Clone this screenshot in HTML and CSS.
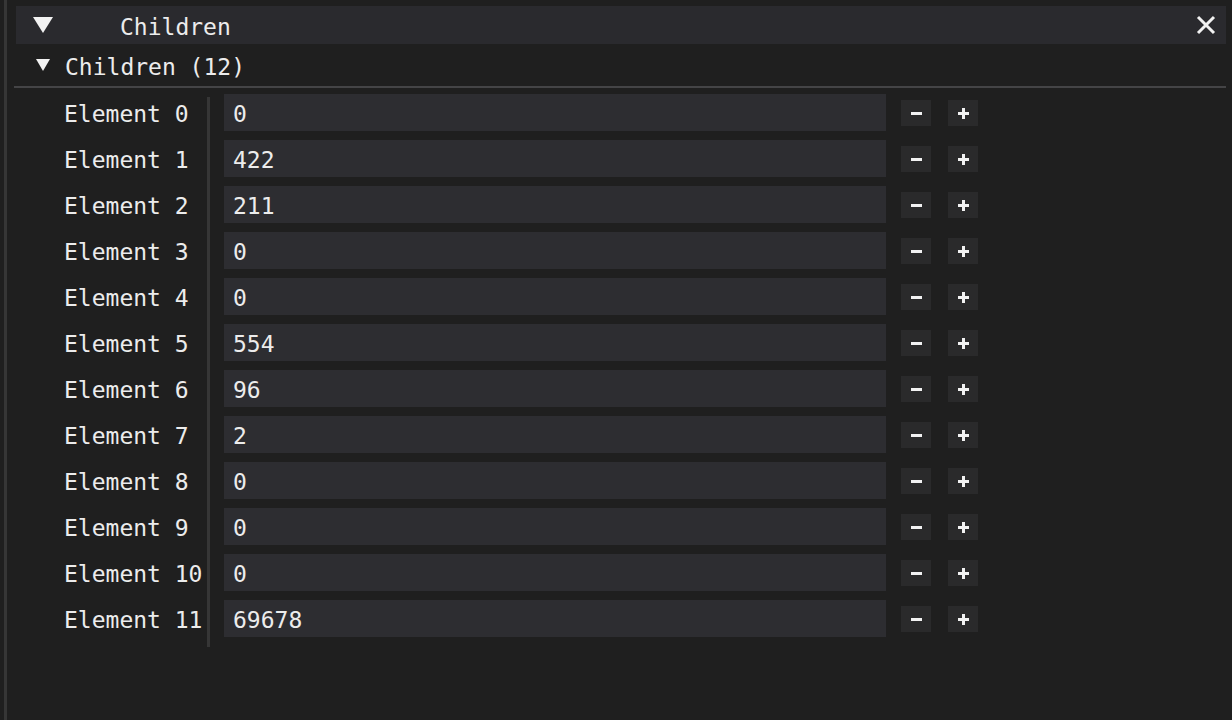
FILE: index.html
```html
<!DOCTYPE html>
<html lang="en">
<head>
  <meta charset="UTF-8">
  <title>Children</title>
  <link rel="stylesheet" href="styles.css">
</head>
<body>

<div class="window">
  <div class="titlebar">
    <svg class="arrow-big" width="20" height="16" viewBox="0 0 20 16"><polygon points="0,0 20,0 10,16" fill="#f2f2f2"/></svg>
    <span class="title">Children</span>
    <svg class="close" width="20" height="20" viewBox="0 0 20 20"><path d="M2 2 L18 18 M18 2 L2 18" stroke="#f2f2f2" stroke-width="3"/></svg>
  </div>

  <div class="tree-node">
    <svg class="arrow-small" width="14" height="12" viewBox="0 0 14 12"><polygon points="0,0 14,0 7,12" fill="#f2f2f2"/></svg>
    <span>Children (12)</span>
  </div>
  <div class="separator"></div>

  <div class="list">
    <div class="divider"></div>
    <!-- 12 rows -->
    <div class="label">Element 0</div><div class="field">0</div><button class="btn minus"></button><button class="btn plus"></button>
    <div class="label">Element 1</div><div class="field">422</div><button class="btn minus"></button><button class="btn plus"></button>
    <div class="label">Element 2</div><div class="field">211</div><button class="btn minus"></button><button class="btn plus"></button>
    <div class="label">Element 3</div><div class="field">0</div><button class="btn minus"></button><button class="btn plus"></button>
    <div class="label">Element 4</div><div class="field">0</div><button class="btn minus"></button><button class="btn plus"></button>
    <div class="label">Element 5</div><div class="field">554</div><button class="btn minus"></button><button class="btn plus"></button>
    <div class="label">Element 6</div><div class="field">96</div><button class="btn minus"></button><button class="btn plus"></button>
    <div class="label">Element 7</div><div class="field">2</div><button class="btn minus"></button><button class="btn plus"></button>
    <div class="label">Element 8</div><div class="field">0</div><button class="btn minus"></button><button class="btn plus"></button>
    <div class="label">Element 9</div><div class="field">0</div><button class="btn minus"></button><button class="btn plus"></button>
    <div class="label">Element 10</div><div class="field">0</div><button class="btn minus"></button><button class="btn plus"></button>
    <div class="label">Element 11</div><div class="field">69678</div><button class="btn minus"></button><button class="btn plus"></button>
  </div>
</div>

</body>
</html>
```

FILE: styles.css
```css
body {
  margin: 0;
  padding: 0;
  background: #1f1f1f;
  color: #ececec;
  font-family: "DejaVu Sans Mono", "Liberation Mono", monospace;
  font-size: 23px;
}

.window {
  margin-left: 4px;
  border-left: 3px solid #363636;
  height: 720px;
  box-sizing: border-box;
  padding-top: 6px;
}

.titlebar {
  display: flex;
  align-items: center;
  height: 38px;
  margin: 0 6px 0 9px;
  background: #2a2a2e;
}

.arrow-big {
  margin-left: 17px;
}

.title {
  margin-left: 67px;
  padding-top: 3px;
}

.close {
  margin-left: auto;
  margin-right: 10px;
}

.tree-node {
  display: flex;
  align-items: center;
  height: 42px;
  padding-left: 29px;
}

.tree-node span {
  margin-left: 15px;
  padding-top: 3px;
}

.separator {
  height: 2px;
  margin: 0 6px 0 7px;
  background: #444446;
}

.list {
  display: grid;
  grid-template-columns: 143px 3px 14px 662px 15px 30px 17px 30px;
  grid-auto-rows: 37px;
  row-gap: 9px;
  align-items: center;
  padding-left: 57px;
  margin-top: 6px;
}

.divider {
  grid-column: 2;
  grid-row: 1 / 13;
  align-self: stretch;
  margin-top: 3px;
  margin-bottom: -10px;
  background: #363636;
}

.label {
  grid-column: 1;
  padding-top: 3px;
}

.field {
  grid-column: 4;
  height: 37px;
  line-height: 40px;
  padding-left: 9px;
  background: #2d2d31;
}

.btn {
  position: relative;
  height: 26px;
  width: 30px;
  padding: 0;
  border: none;
  background: #2a2a2b;
}

.minus {
  grid-column: 6;
}

.plus {
  grid-column: 8;
}

.btn::before,
.plus::after {
  content: "";
  position: absolute;
  background: #f2f2f2;
}

.btn::before {
  left: 10px;
  top: 12px;
  width: 11px;
  height: 3px;
}

.plus::after {
  left: 14px;
  top: 8px;
  width: 3px;
  height: 11px;
}
```
